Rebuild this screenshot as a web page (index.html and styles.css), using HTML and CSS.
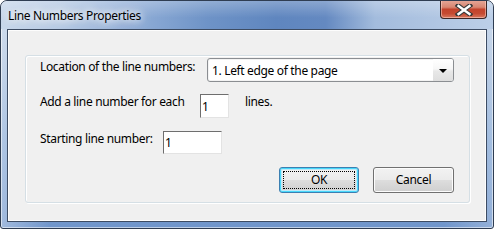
FILE: index.html
```html
<!DOCTYPE html>
<html>
<head>
<meta charset="utf-8">
<title>Line Numbers Properties</title>
<link rel="stylesheet" href="styles.css">
</head>
<body>
<div class="window">
  <div class="titlebar">
    <span class="title">Line Numbers Properties</span>
    <div class="close">
      <svg width="18" height="12" viewBox="0 0 18 12">
        <path d="M3 1.5 L15 10.5 M15 1.5 L3 10.5" stroke="#3a3a3a" stroke-width="4.6" stroke-linecap="square" fill="none"/>
        <path d="M3.5 2 L14.5 10 M14.5 2 L3.5 10" stroke="#ffffff" stroke-width="2.4" stroke-linecap="square" fill="none"/>
      </svg>
    </div>
  </div>
  <div class="client">
    <div class="group">
      <div class="row row-loc">
        <span class="label label-loc">Location of the line numbers:</span>
        <div class="combo">
          <span class="combo-text">1. Left edge of the page</span>
          <span class="combo-btn"><span class="arrow"></span></span>
        </div>
      </div>
      <div class="row row-each">
        <span class="label label-each">Add a line number for each</span>
        <span class="edit edit-each">1</span>
        <span class="suffix">lines.</span>
      </div>
      <div class="row row-start">
        <span class="label label-start">Starting line number:</span>
        <span class="edit edit-start">1</span>
      </div>
      <div class="buttons">
        <div class="btn btn-ok"><span class="focus">OK</span></div>
        <div class="btn btn-cancel">Cancel</div>
      </div>
    </div>
  </div>
</div>
</body>
</html>
```
FILE: styles.css
```css
html, body {
  margin: 0;
  padding: 0;
  background: #ffffff;
}
body {
  font-family: "Noto Sans", "Open Sans", sans-serif;
  font-size: 12px;
  letter-spacing: -0.34px;
  color: #000;
}
.window {
  width: 494px;
  height: 229px;
  box-sizing: border-box;
  border: 1px solid #2f3d52;
  border-radius: 7px 7px 3px 3px;
  padding: 0 6px 6px 6px;
  display: flex;
  flex-direction: column;
  overflow: hidden;
  background:
    linear-gradient(90deg, rgba(255,255,255,0.35), rgba(255,255,255,0) 10%, rgba(255,255,255,0) 90%, rgba(255,255,255,0.25)),
    linear-gradient(180deg, #bdd0e8 0px, #a9c0de 60px, #86a9d6 140px, #6f95cb 229px);
  box-shadow: inset 0 0 0 1px rgba(255,255,255,0.55);
}
.titlebar {
  height: 28px;
  flex: none;
  display: flex;
  justify-content: space-between;
  align-items: flex-start;
  margin: 0 -6px;
  padding: 0 6px 0 7px;
  background:
    linear-gradient(180deg, rgba(255,255,255,0.25), rgba(255,255,255,0) 60%),
    linear-gradient(90deg, #c8d7ea 0%, #b6cae4 12%, #8eacd6 28%, #6e93c7 42%, #5f86bf 56%, #6489c1 66%, #a3bcdd 76%, #b2c7e3 90%, #bccfe8 100%);
  border-radius: 6px 6px 0 0;
}
.title {
  margin-top: 7px;
  line-height: 15px;
  font-size: 12px;
  color: #000;
  text-shadow: 0 0 6px rgba(255,255,255,0.95), 0 0 10px rgba(255,255,255,0.9), 0 0 14px rgba(255,255,255,0.8);
}
.close {
  width: 47px;
  height: 19px;
  margin-top: -1px;
  box-sizing: border-box;
  border: 1px solid #3b2626;
  border-top: none;
  border-radius: 0 0 4px 4px;
  background: linear-gradient(180deg, #e6a899 0%, #d88672 40%, #c3432c 52%, #c54a32 75%, #d8785f 100%);
  box-shadow: inset 0 0 0 1px rgba(255,220,210,0.5);
  display: flex;
  align-items: center;
  justify-content: center;
}
.close svg {
  display: block;
  margin-top: 1px;
}
.client {
  flex: 1;
  background: #f0f0f0;
  border: 1px solid #3d4c63;
  box-shadow: inset 0 0 0 1px #fdfdfd;
  padding: 25px 16px 18px 17px;
  display: flex;
  flex-direction: column;
}
.group {
  flex: 1;
  border: 1px solid #d5dfe5;
  border-radius: 3px;
  box-shadow: inset 1px 1px 0 #ffffff, 1px 1px 0 #ffffff;
  padding: 2px 15px 0 14px;
  display: flex;
  flex-direction: column;
}
.row {
  display: flex;
  align-items: flex-start;
}
.label {
  flex: none;
  line-height: 16px;
}
.row-loc {
  height: 24px;
}
.label-loc {
  width: 167px;
  margin-top: 1px;
}
.combo {
  flex: 1;
  height: 24px;
  box-sizing: border-box;
  border: 1px solid #8b8e92;
  border-radius: 3px;
  background: #ffffff;
  display: flex;
  align-items: stretch;
  box-shadow: inset 0 0 0 1px #f3f3f3;
}
.combo-text {
  flex: 1;
  padding-left: 4px;
  line-height: 22px;
  margin-top: 1px;
}
.combo-btn {
  width: 20px;
  flex: none;
  background: linear-gradient(180deg, #ffffff 0%, #f7f7f7 45%, #e8e8e8 55%, #dedede 100%);
  border-radius: 0 2px 2px 0;
  display: flex;
  align-items: center;
  justify-content: center;
}
.arrow {
  width: 0;
  height: 0;
  border-left: 4px solid transparent;
  border-right: 4px solid transparent;
  border-top: 4px solid #000;
  margin-top: 1px;
}
.edit {
  flex: none;
  box-sizing: border-box;
  background: #ffffff;
  border-top: 1px solid #6e6e6e;
  border-left: 1px solid #6e6e6e;
  border-right: 1px solid #e3e3e3;
  border-bottom: 1px solid #e3e3e3;
  padding-left: 1px;
  line-height: 20px;
  color: #000;
}
.row-each {
  margin-top: 12px;
  height: 24px;
}
.label-each {
  width: 160px;
  margin-top: 0px;
}
.edit-each {
  width: 29px;
  height: 24px;
  padding-top: 2px;
}
.suffix {
  margin-left: 16px;
  line-height: 16px;
}
.row-start {
  margin-top: 13px;
  height: 23px;
}
.label-start {
  width: 123px;
  margin-top: 0px;
}
.edit-start {
  width: 59px;
  height: 23px;
  padding-top: 1px;
}
.buttons {
  margin-top: 13px;
  display: flex;
  justify-content: flex-end;
  gap: 14px;
}
.btn {
  height: 26px;
  box-sizing: border-box;
  border: 1px solid #707070;
  border-radius: 3px;
  background: linear-gradient(180deg, #f2f2f2 0%, #ebebeb 48%, #dddddd 52%, #cfcfcf 100%);
  box-shadow: inset 0 0 0 1px #fcfcfc;
  display: flex;
  align-items: center;
  justify-content: center;
  line-height: 16px;
}
.btn-ok {
  width: 80px;
  border-color: #3c7fb1;
  box-shadow: inset 0 0 0 1px #48d8fb, inset 0 0 0 2px #bfe9f8;
  padding: 3px;
}
.btn-cancel {
  width: 81px;
}
.focus {
  flex: 1;
  align-self: stretch;
  border: 1px dotted #000;
  display: flex;
  align-items: center;
  justify-content: center;
}
```
